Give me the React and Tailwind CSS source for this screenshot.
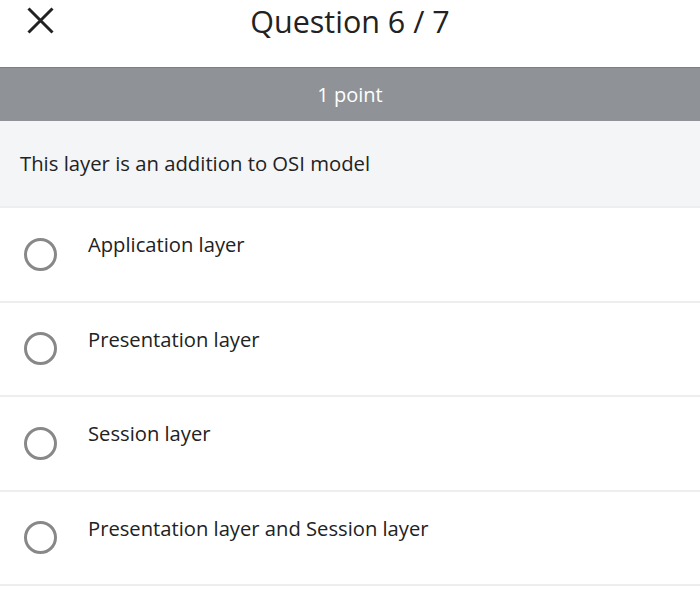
import { useState } from 'react';

const options = [
  'Application layer',
  'Presentation layer',
  'Session layer',
  'Presentation layer and Session layer',
];

export default function App() {
  const [selected, setSelected] = useState(null);

  return (
    <div className="min-h-screen bg-white font-['Open_Sans',sans-serif] text-[#222]">
      {/* Header */}
      <div className="relative h-[67px] flex justify-center">
        <button className="absolute left-[27px] top-[7px] w-[27px] h-[27px]">
          <svg viewBox="0 0 27 27" className="w-[27px] h-[27px]">
            <path d="M1.5 1.5 L25.5 25.5 M25.5 1.5 L1.5 25.5" stroke="#222" strokeWidth="3" />
          </svg>
        </button>
        <h1 className="text-[30.5px] leading-[42px]">Question 6 / 7</h1>
      </div>

      {/* Points bar */}
      <div className="h-[54px] bg-[#8f9397] border-t border-[#7c8084] flex items-center justify-center text-white text-[20px]">
        1 point
      </div>

      {/* Question */}
      <div className="h-[85px] bg-[#f4f5f7] flex items-center px-5 text-[20.3px]">
        This layer is an addition to OSI model
      </div>

      {/* Options */}
      <div className="border-t-2 border-[#eeeeee]">
        {options.map((opt, i) => (
          <div
            key={opt}
            onClick={() => setSelected(i)}
            className="h-[94.5px] border-b-2 border-[#eeeeee] flex items-start cursor-pointer"
          >
            <div className="w-[88px] h-full flex items-center pl-6">
              <span className="w-[33px] h-[33px] rounded-full border-[3px] border-[#888] flex items-center justify-center">
                {selected === i && <span className="w-[17px] h-[17px] rounded-full bg-[#888]" />}
              </span>
            </div>
            <div className="pt-[21px] text-[20.2px] leading-[30px]">{opt}</div>
          </div>
        ))}
      </div>
    </div>
  );
}
